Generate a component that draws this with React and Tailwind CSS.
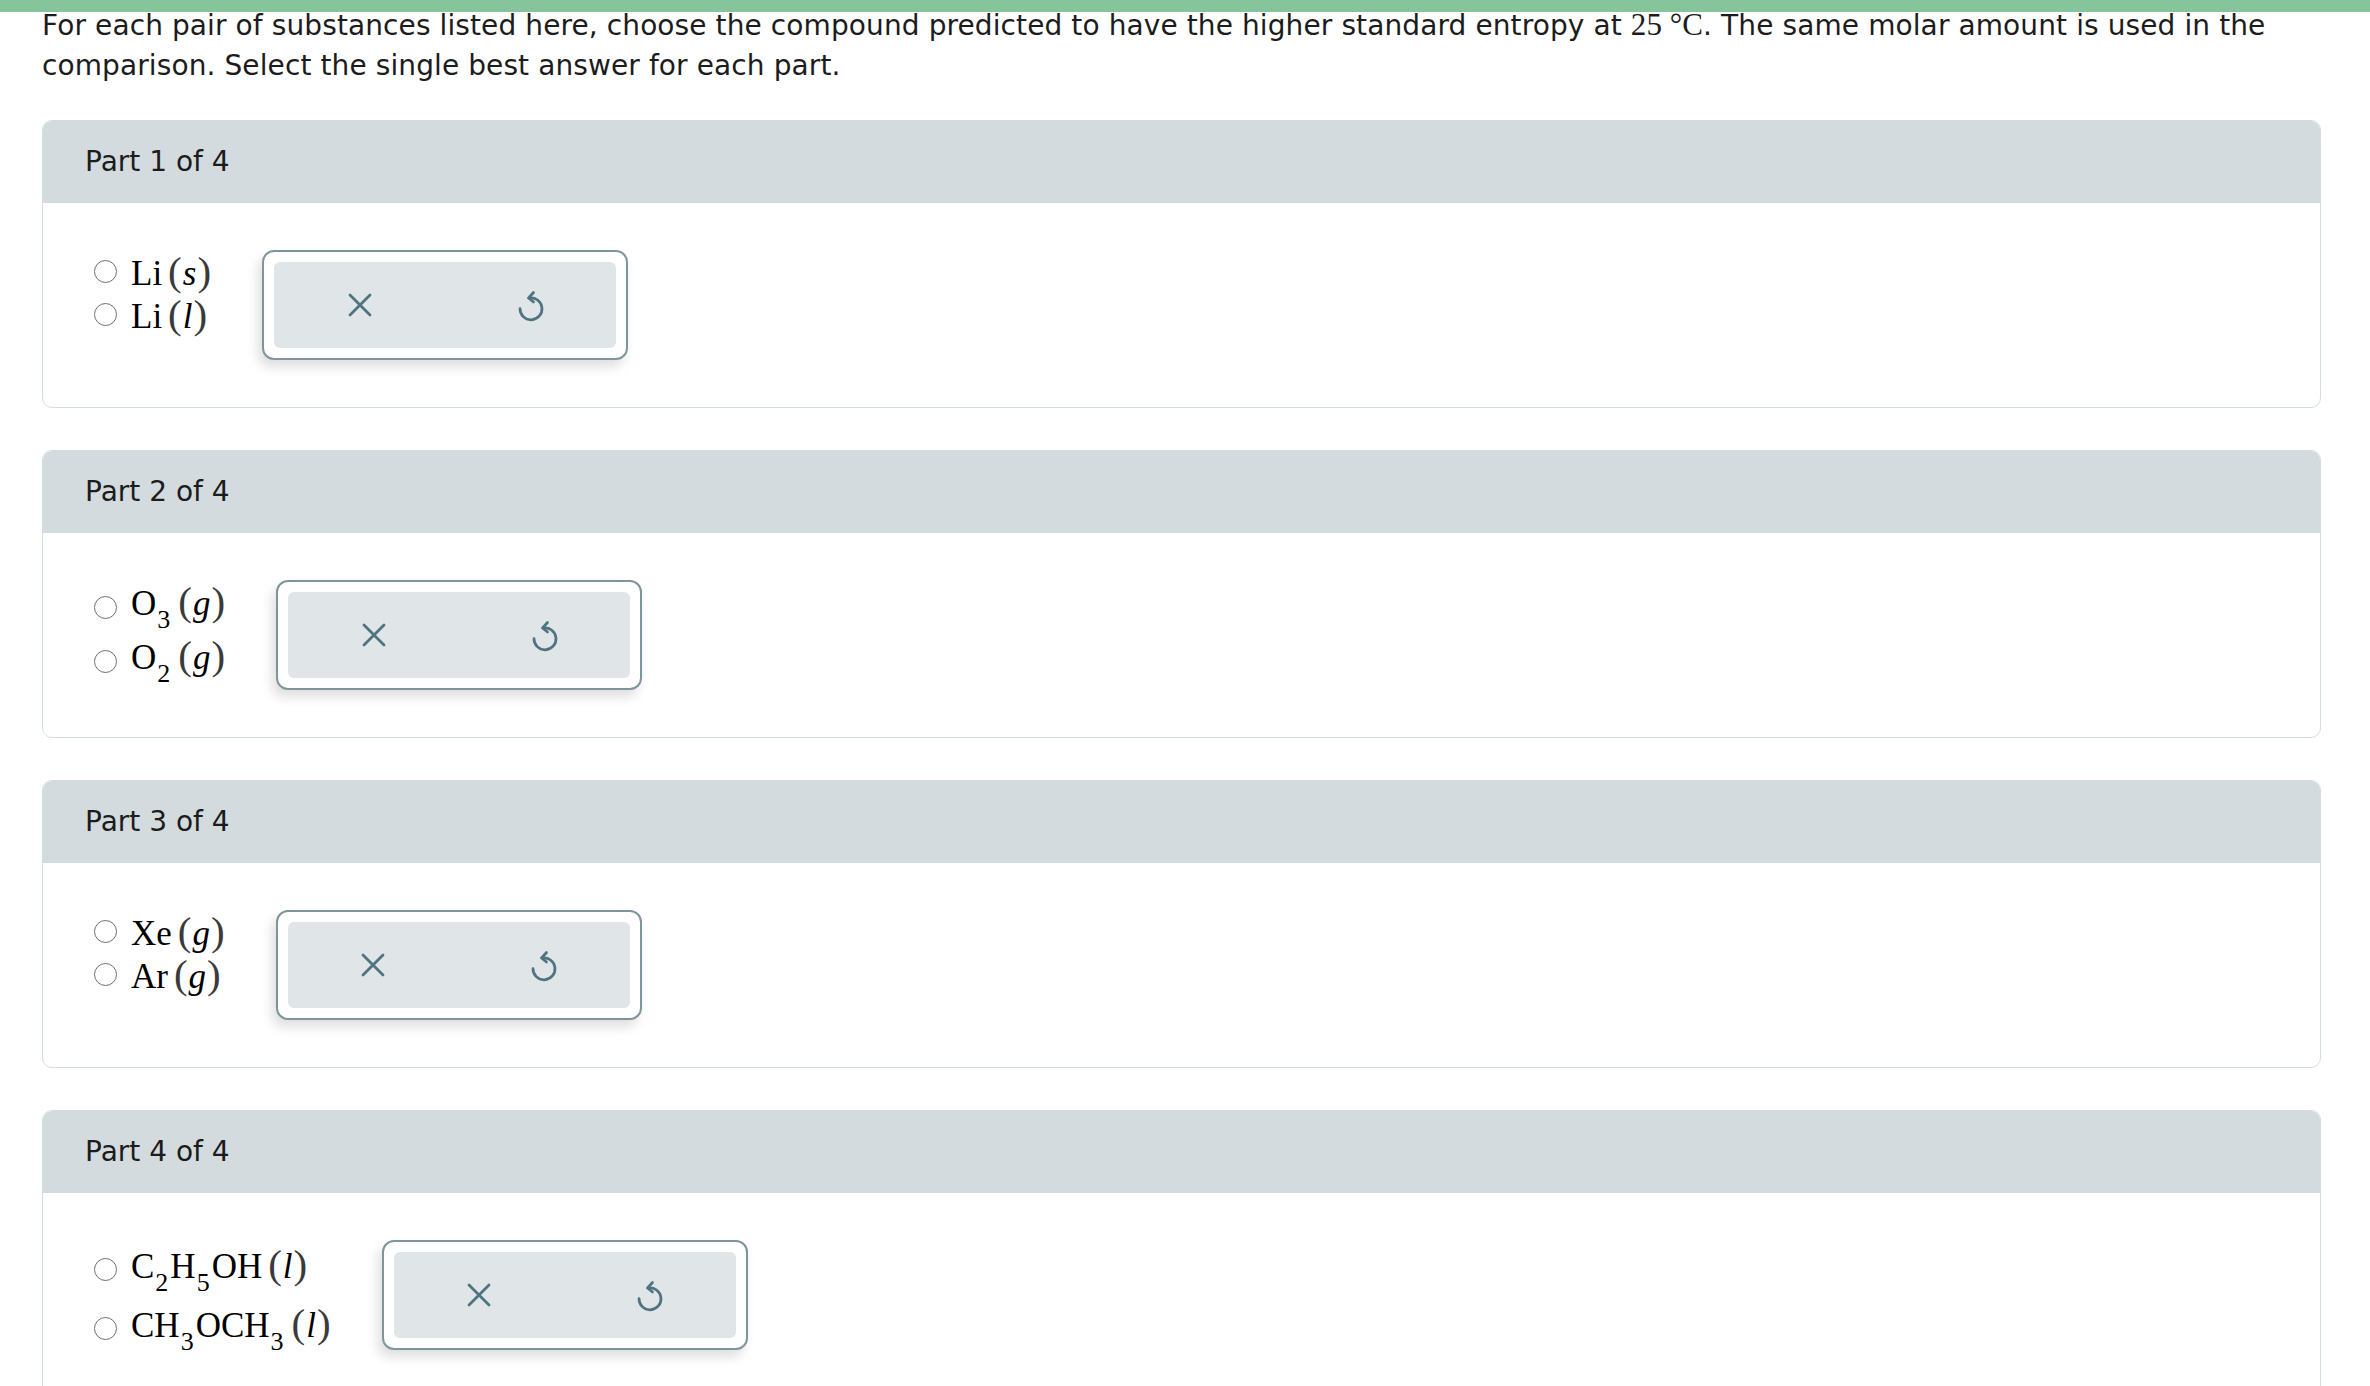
import React from 'react'

const parts = [
  {
    n: 1,
    rowH: 'h-[43px]',
    options: [
      [{ t: 'Li' }, { state: 's' }],
      [{ t: 'Li' }, { state: 'l' }],
    ],
  },
  {
    n: 2,
    rowH: 'h-[54px]',
    options: [
      [{ t: 'O' }, { sub: '3' }, { state: 'g' }],
      [{ t: 'O' }, { sub: '2' }, { state: 'g' }],
    ],
  },
  {
    n: 3,
    rowH: 'h-[43px]',
    options: [
      [{ t: 'Xe' }, { state: 'g' }],
      [{ t: 'Ar' }, { state: 'g' }],
    ],
  },
  {
    n: 4,
    rowH: 'h-[59px]',
    options: [
      [{ t: 'C' }, { sub: '2' }, { t: 'H' }, { sub: '5' }, { t: 'OH' }, { state: 'l' }],
      [{ t: 'CH' }, { sub: '3' }, { t: 'OCH' }, { sub: '3' }, { state: 'l' }],
    ],
  },
]

function Formula({ pieces }) {
  return (
    <span className="ml-[14px] font-['Liberation_Serif',serif] text-[35px] leading-none text-black whitespace-nowrap">
      {pieces.map((p, i) => {
        if (p.t) return <span key={i}>{p.t}</span>
        if (p.sub) return <span key={i} className="text-[26px] align-[-13px] pl-[1px] pr-[2px]">{p.sub}</span>
        return (
          <span key={i} className="ml-[6px]">
            <span className="text-[41px] text-[#3a3a3a]">(</span>
            <i className="px-[1px]">{p.state}</i>
            <span className="text-[41px] text-[#3a3a3a]">)</span>
          </span>
        )
      })}
    </span>
  )
}

function XIcon() {
  return (
    <svg width="24" height="24" viewBox="0 0 24 24" fill="none" stroke="#4f7380" strokeWidth="2.8" strokeLinecap="round">
      <path d="M2 2 L22 22 M22 2 L2 22" />
    </svg>
  )
}

function UndoIcon() {
  return (
    <svg width="26" height="33" viewBox="0 0 26 33" fill="none" stroke="#4f7380" strokeWidth="2.7" strokeLinecap="round" strokeLinejoin="round">
      <path d="M11 9 A11 11 0 1 1 2 19.5" />
      <path d="M15.5 3.5 L10.5 9 L15.5 13" />
    </svg>
  )
}

function ToolBox() {
  return (
    <div className="ml-[51px] w-[366px] h-[110px] shrink-0 rounded-[12px] border-2 border-[#7f959e] bg-white p-[10px] shadow-[-4px_7px_12px_rgba(0,0,0,0.13)]">
      <div className="h-full rounded-[6px] bg-[#e0e5e8] grid grid-cols-2">
        <div className="flex items-center justify-center">
          <XIcon />
        </div>
        <div className="flex items-center justify-center">
          <UndoIcon />
        </div>
      </div>
    </div>
  )
}

function Part({ part }) {
  return (
    <div className="rounded-[10px] border-[1.5px] border-[#d5dce0] overflow-hidden bg-white">
      <div className="h-[82px] bg-[#d3dbdf] flex items-center px-[42px] text-[28px]">
        Part {part.n} of 4
      </div>
      <div className="flex items-start pl-[51px] py-[47px]">
        <div className="flex flex-col">
          {part.options.map((o, i) => (
            <label key={i} className={`flex items-center ${part.rowH}`}>
              <span className="w-[23px] h-[23px] shrink-0 rounded-full border-[1.5px] border-[#6f6f6f] bg-white" />
              <Formula pieces={o} />
            </label>
          ))}
        </div>
        <ToolBox />
      </div>
    </div>
  )
}

export default function App() {
  return (
    <div className="relative min-h-screen bg-white font-['DejaVu_Sans',Verdana,sans-serif] text-[#1c1c1c]">
      <div className="absolute top-0 left-0 right-0 h-[12px] bg-[#86c49b]" />
      <div className="pl-[42px] pr-[49px] pt-[5px]">
        <p className="text-[28px] leading-[40px] tracking-[0.1px]">
          For each pair of substances listed here, choose the compound predicted to have the higher standard entropy at{' '}
          <span className="font-['Liberation_Serif',serif] text-[31px]">25 °C</span>. The same molar amount is used in the
          comparison. Select the single best answer for each part.
        </p>
        <div className="mt-[34px] flex flex-col gap-[42px]">
          {parts.map((p) => (
            <Part key={p.n} part={p} />
          ))}
        </div>
      </div>
    </div>
  )
}
